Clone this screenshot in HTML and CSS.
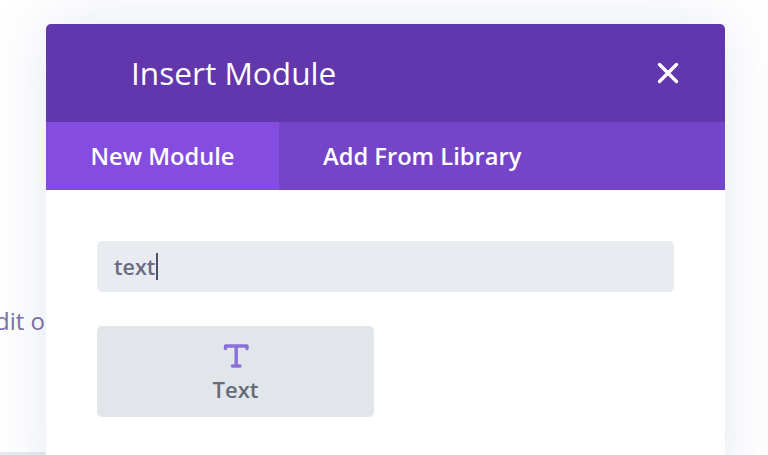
FILE: index.html
```html
<!DOCTYPE html>
<html lang="en">
<head>
<meta charset="UTF-8">
<meta name="viewport" content="width=device-width, initial-scale=1.0">
<title>Insert Module</title>
<link rel="stylesheet" href="styles.css">
</head>
<body>
<div class="page">
<div class="backdrop">
<p class="backdrop-text">dit o</p>
<div class="backdrop-strip"></div>
</div>
<div class="modal">
<div class="modal-header">
<h2>Insert Module</h2>
<svg class="close-icon" width="24" height="24" viewBox="0 0 24 24" aria-label="Close">
<path d="M3.5 3.5L20.5 20.5M20.5 3.5L3.5 20.5" stroke="#fff" stroke-width="3.4" stroke-linecap="round" fill="none"/>
</svg>
</div>
<div class="modal-tabs">
<div class="tab tab-active">New Module</div>
<div class="tab">Add From Library</div>
</div>
<div class="modal-body">
<div class="search-box"><span class="search-value">text</span><span class="caret"></span></div>
<div class="module-card">
<svg class="module-icon" width="26" height="26" viewBox="0 0 26 26">
<path d="M2.5 4H24M2.5 4V6.5M24 4V6.5M13.2 4V23.5M9.5 24H17" stroke="#8a70d6" stroke-width="3.4" stroke-linecap="round" fill="none"/>
</svg>
<span class="module-label">Text</span>
</div>
</div>
</div>
</div>
</body>
</html>
```

FILE: styles.css
```css
html,
body {
  margin: 0;
  padding: 0;
  height: 100%;
  background-color: #fff;
  font-family: "Open Sans", Arial, sans-serif;
}

.page {
  position: relative;
  width: 768px;
  height: 455px;
  overflow: hidden;
}

.backdrop {
  width: 46px;
  height: 455px;
  display: flex;
  flex-direction: column;
  overflow: hidden;
}

.backdrop-text {
  margin: 307px 0 0 -5px;
  font-size: 24px;
  line-height: 28px;
  color: #7b6fa8;
  white-space: nowrap;
}

.backdrop-strip {
  margin-top: auto;
  height: 3px;
  background-color: #e9ebef;
}

.modal {
  position: absolute;
  top: 24px;
  left: 46px;
  width: 679px;
  height: 470px;
  background-color: #fff;
  border-radius: 5px 5px 0 0;
  box-shadow: 0 0 60px rgba(91, 110, 170, 0.16);
  overflow: hidden;
}

.modal-header {
  height: 98px;
  display: flex;
  justify-content: space-between;
  align-items: center;
  padding: 0 45px 0 85px;
  background-color: #6237ae;
}

.modal-header h2 {
  margin: 0 0 2px;
  font-size: 31.6px;
  font-weight: 500;
  color: #fff;
}

.modal-tabs {
  height: 68px;
  display: flex;
  background-color: #7644c8;
}

.tab {
  display: flex;
  align-items: center;
  padding: 0 44px;
  font-size: 23.7px;
  font-weight: 600;
  color: #fff;
}

.tab-active {
  padding: 0 44.5px;
  background-color: #844ddf;
}

.modal-body {
  padding: 51px 51px 0;
}

.search-box {
  height: 51px;
  display: flex;
  align-items: center;
  padding: 0 17px;
  background-color: #e8ebf0;
  border-radius: 5px;
}

.search-value {
  font-size: 21.5px;
  font-weight: 600;
  color: #6b6b85;
}

.caret {
  width: 1.5px;
  height: 27px;
  margin-left: 1px;
  background-color: #50506a;
}

.module-card {
  width: 277px;
  height: 91px;
  margin-top: 34px;
  display: flex;
  flex-direction: column;
  align-items: center;
  background-color: #e2e6ea;
  border-radius: 5px;
}

.module-icon {
  margin-top: 16px;
}

.module-label {
  margin-top: 8px;
  font-size: 22px;
  line-height: 26px;
  font-weight: 600;
  color: #666b78;
}
```
